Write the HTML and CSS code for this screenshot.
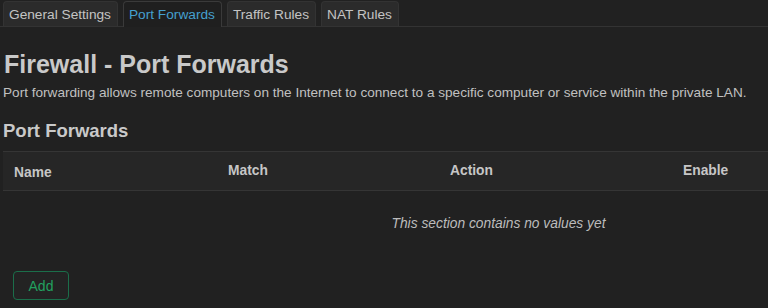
FILE: index.html
```html
<!DOCTYPE html>
<html lang="en">

<head>
    <meta charset="UTF-8">
    <meta name="viewport" content="width=device-width, initial-scale=1.0">
    <title>Firewall - Port Forwards</title>
    <link rel="stylesheet" href="styles.css">
</head>

<body>
    <ul class="tabs">
        <li class="tab">General Settings</li>
        <li class="tab active">Port Forwards</li>
        <li class="tab">Traffic Rules</li>
        <li class="tab">NAT Rules</li>
    </ul>

    <div class="page">
        <h2>Firewall - Port Forwards</h2>
        <p class="desc">Port forwarding allows remote computers on the Internet to connect to a specific computer or service within the private LAN.</p>

        <h3>Port Forwards</h3>
        <div class="table">
            <div class="tr th-row">
                <div class="th name">Name</div>
                <div class="th">Match</div>
                <div class="th">Action</div>
                <div class="th">Enable</div>
            </div>
            <div class="tr empty-row">
                <div class="empty">This section contains no values yet</div>
            </div>
        </div>

        <button class="btn-add">Add</button>
    </div>
</body>

</html>
```

FILE: styles.css
```css
/* dark luci-ish theme */
body {
    margin: 0;
    background: #212121;
    color: #c8c8c8;
    font-family: 'Liberation Sans', Arial, sans-serif;
    font-size: 14px;
    overflow: hidden;
}

.tabs {
    list-style: none;
    margin: 0;
    padding: 1px 0 0 3px;
    display: flex;
    gap: 5px;
    border-bottom: 1px solid #333;
}

.tab {
    height: 24px;
    line-height: 25px;
    padding: 0 6px 0 5px;
    font-size: 13.7px;
    color: #c4c4c4;
    background: #2b2b2b;
    border: 1px solid #333;
    border-bottom: none;
    border-radius: 4px 4px 0 0;
    margin-bottom: -1px;
}

.tab.active {
    background: #1f1f1f;
    color: #45a0cf;
    border-color: #3a3a3a;
    height: 25px;
}

.page {
    padding-left: 3px;
}

h2 {
    margin: 22px 0 0 1px;
    font-size: 25px;
    line-height: 30px;
    color: #c9c9c9;
}

.desc {
    margin: 5px 0 0 0;
    font-size: 13.6px;
    line-height: 17px;
    color: #c0c0c0;
    white-space: nowrap;
}

h3 {
    margin: 19px 0 0 0;
    font-size: 18.5px;
    line-height: 22px;
    color: #c9c9c9;
}

.table {
    margin-top: 9px;
}

.tr {
    display: grid;
    grid-template-columns: 214px 222px 233px 1fr;
}

.th-row {
    background: #262626;
    border-top: 1px solid #353535;
    border-bottom: 1px solid #353535;
    height: 38px;
    align-items: center;
}

.th {
    padding-left: 11px;
    font-weight: bold;
    font-size: 13.8px;
    color: #c6c6c6;
    margin-top: -2px;
}

.th.name {
    margin-top: 2px;
}

.empty-row {
    height: 62px;
}

.empty {
    grid-column: 2 / 5;
    text-align: center;
    font-style: italic;
    color: #bcbcbc;
    font-size: 13.8px;
    padding: 25px 0 0 12px;
}

.btn-add {
    margin: 18px 0 0 10px;
    width: 56px;
    height: 29px;
    background: #232323;
    border: 1px solid #1b6e4a;
    border-radius: 4px;
    color: #22a05f;
    font-family: inherit;
    font-size: 14px;
    cursor: pointer;
}
```
